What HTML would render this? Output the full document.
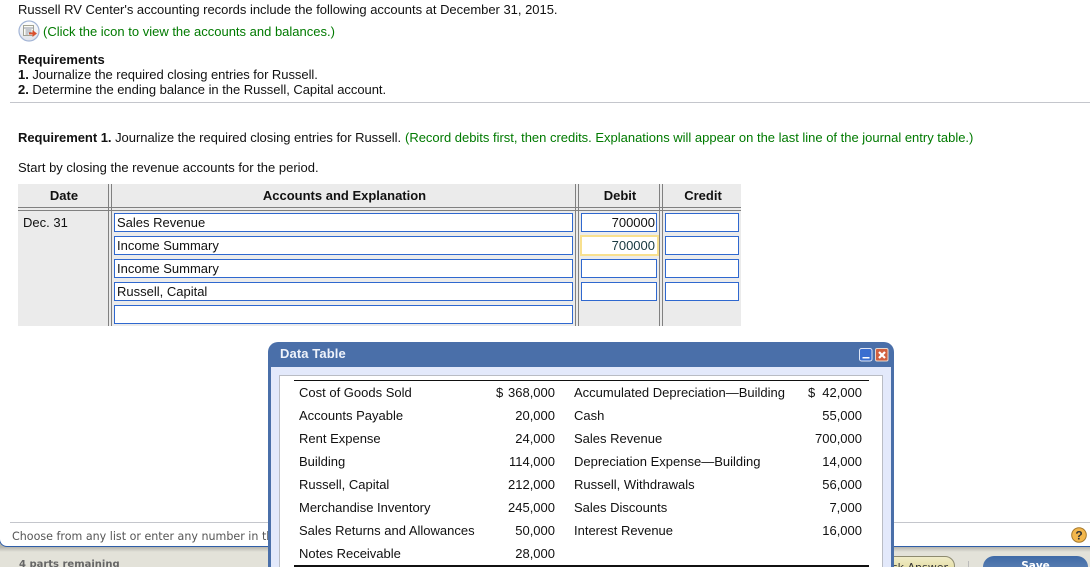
<!DOCTYPE html>
<html><head><meta charset="utf-8">
<style>
html,body{margin:0;padding:0;background:#fff;width:1090px;height:567px;overflow:hidden}
#p{position:relative;width:1090px;height:567px;overflow:hidden;font-family:"Liberation Sans",sans-serif;font-size:13px;color:#111}
.t{position:absolute;white-space:nowrap;line-height:16px}
.g{color:#007a00}
.b{font-weight:bold}
.box{position:absolute;box-sizing:border-box;height:19px;border:1px solid #2f68cf;background:#fff;line-height:18px;padding-left:2px;white-space:nowrap;overflow:hidden}
.r{text-align:right;padding:0 1px 0 0}
.gr{position:absolute;background:#808080}
.c{position:absolute;white-space:nowrap;line-height:16px}
.n{text-align:right}
</style></head><body><div id="p">

<div class="t" style="left:18px;top:2px;letter-spacing:-.02px">Russell RV Center's accounting records include the following accounts at December 31, 2015.</div>
<svg style="position:absolute;left:18px;top:20px" width="23" height="23" viewBox="0 0 23 23">
<defs><linearGradient id="ic" x1="0" y1="0" x2="0" y2="1"><stop offset="0" stop-color="#fff"/><stop offset="1" stop-color="#dfe3ea"/></linearGradient></defs>
<circle cx="11" cy="11" r="10" fill="url(#ic)" stroke="#a3b5d6" stroke-width="1.2"/>
<rect x="5.5" y="5.5" width="10" height="10" fill="#fbfbf4" stroke="#9a9a8a" stroke-width=".9"/>
<path d="M5.5 8h10M7.5 10h6M7.5 12h6M7.5 14h3" stroke="#8c93a6" stroke-width=".9" fill="none"/>
<path d="M11 12.5h3.5v-2.5l4.5 3.5-4.5 3.5v-2.5h-3.5z" fill="#d9502e"/>
</svg>
<div class="t g" style="left:43px;top:24px">(Click the icon to view the accounts and balances.)</div>
<div class="t b" style="left:18px;top:52px">Requirements</div>
<div class="t" style="left:18px;top:67px;letter-spacing:-.04px"><b>1.</b> Journalize the required closing entries for Russell.</div>
<div class="t" style="left:18px;top:82px;letter-spacing:-.03px"><b>2.</b> Determine the ending balance in the Russell, Capital account.</div>
<div style="position:absolute;left:10px;top:102px;width:1080px;height:1px;background:#c4c6cc"></div>

<div class="t" style="left:18px;top:130px"><span style="letter-spacing:-.03px"><b>Requirement 1.</b> Journalize the required closing entries for Russell.</span></div>
<div class="t g" style="left:405px;top:130px;letter-spacing:-.01px">(Record debits first, then credits. Explanations will appear on the last line of the journal entry table.)</div>
<div class="t" style="left:18px;top:160px">Start by closing the revenue accounts for the period.</div>

<div style="position:absolute;left:18px;top:184px;width:723px;height:142px;background:#ebebeb"></div>
<div class="gr" style="left:18px;top:207px;width:723px;height:1px"></div>
<div class="gr" style="left:18px;top:210px;width:723px;height:1px"></div>
<div class="gr" style="left:108px;top:184px;width:1px;height:142px"></div>
<div class="gr" style="left:111px;top:184px;width:1px;height:142px"></div>
<div class="gr" style="left:575px;top:184px;width:1px;height:142px"></div>
<div class="gr" style="left:578px;top:184px;width:1px;height:142px"></div>
<div class="gr" style="left:659px;top:184px;width:1px;height:142px"></div>
<div class="gr" style="left:662px;top:184px;width:1px;height:142px"></div>

<div class="t b" style="left:19px;width:90px;text-align:center;top:188px">Date</div>
<div class="t b" style="left:113px;width:463px;text-align:center;top:188px">Accounts and Explanation</div>
<div class="t b" style="left:580px;width:80px;text-align:center;top:188px">Debit</div>
<div class="t b" style="left:664px;width:78px;text-align:center;top:188px">Credit</div>
<div class="t" style="left:23px;top:215px">Dec. 31</div>

<div class="box" style="left:114px;top:213px;width:459px">Sales Revenue</div>
<div class="box" style="left:114px;top:236px;width:459px">Income Summary</div>
<div class="box" style="left:114px;top:259px;width:459px">Income Summary</div>
<div class="box" style="left:114px;top:282px;width:459px">Russell, Capital</div>
<div class="box" style="left:114px;top:305px;width:459px"></div>

<div class="box r" style="left:581px;top:213px;width:76px">700000</div>
<div class="box r" style="left:580px;top:235px;width:79px;height:21px;border:2px solid #f8e08e;color:#17383f;padding-right:2px;line-height:18px">700000</div>
<div class="box" style="left:581px;top:259px;width:76px"></div>
<div class="box" style="left:581px;top:282px;width:76px"></div>

<div class="box" style="left:665px;top:213px;width:74px"></div>
<div class="box" style="left:665px;top:236px;width:74px"></div>
<div class="box" style="left:665px;top:259px;width:74px"></div>
<div class="box" style="left:665px;top:282px;width:74px"></div>

<!-- footer -->
<div style="position:absolute;left:0;top:540px;width:1090px;height:27px;background:linear-gradient(#b5b4ac,#b5b4ac 7px,#e3e2d9 12px)"></div>
<div style="position:absolute;left:-1px;top:500px;width:1100px;height:47px;box-sizing:border-box;border-bottom:1px solid #2f5ea8;border-left:1px solid #2f5ea8;border-radius:0 0 0 8px;background:#fff"></div>
<div style="position:absolute;left:10px;top:522px;width:1080px;height:1px;background:#c4c6cc"></div>
<div class="t" style="left:12px;top:529px;font-family:'DejaVu Sans',sans-serif;font-size:11.1px;color:#555">Choose from any list or enter any number in the input fields and then click Check Answer.</div>
<div class="t" style="left:19px;top:557px;font-family:'DejaVu Sans',sans-serif;font-size:10px;font-weight:bold;color:#666">4 parts remaining</div>
<svg style="position:absolute;left:1071px;top:527px" width="16" height="16" viewBox="0 0 16 16">
<circle cx="8" cy="8" r="7.3" fill="#f3b74c" stroke="#a5782a"/>
<text x="8" y="12.5" text-anchor="middle" font-family="Liberation Sans" font-weight="bold" font-size="12" fill="#333">?</text>
</svg>
<div style="position:absolute;left:860px;top:556px;width:95px;height:20px;box-sizing:border-box;border:1px solid #8d8a6f;border-radius:10px;background:linear-gradient(#f0ecc8,#dfd793);line-height:22px;text-align:right;padding-right:6px;color:#333;font-family:'DejaVu Sans',sans-serif;font-size:11px;overflow:hidden">Check Answer</div>
<div style="position:absolute;left:968px;top:561px;width:1px;height:6px;background:#bbb"></div>
<div style="position:absolute;left:983px;top:556px;width:105px;height:24px;border-radius:11px;background:linear-gradient(#3f6aa6,#6f8fbd);color:#fff;font-weight:bold;font-size:10.5px;line-height:20px;text-align:center;font-family:'DejaVu Sans',sans-serif">Save</div>

<!-- modal -->
<div style="position:absolute;left:268px;top:342px;width:626px;height:240px;background:#4a6fa9;border-radius:10px 10px 0 0"></div>
<div style="position:absolute;left:271px;top:367px;width:620px;height:215px;background:#e3e9fb"></div>
<div style="position:absolute;left:279px;top:375px;width:602px;height:210px;background:#fff;border:1px solid #b9bcc4"></div>
<div class="t b" style="left:280px;top:346px;color:#eef2fa;letter-spacing:.1px">Data Table</div>
<svg style="position:absolute;left:859px;top:348px" width="30" height="14" viewBox="0 0 30 14">
<rect x=".5" y=".5" width="12.5" height="12.5" rx="2" fill="#3a6ed0" stroke="#dfe6f5"/>
<rect x="3.5" y="9" width="7" height="1.5" fill="#fff"/>
<rect x="16.5" y=".5" width="12.5" height="12.5" rx="1.5" fill="#d2603f" stroke="#e8d8cc"/>
<path d="M20 4l6 6M26 4l-6 6" stroke="#fff" stroke-width="2.2"/>
</svg>

<div style="position:absolute;left:294px;top:380px;width:575px;height:1px;background:#111"></div>
<div style="position:absolute;left:294px;top:565px;width:575px;height:1.5px;background:#111"></div>

<div class="c" style="left:299px;top:385px">Cost of Goods Sold</div>
<div class="c" style="left:299px;top:408px">Accounts Payable</div>
<div class="c" style="left:299px;top:431px">Rent Expense</div>
<div class="c" style="left:299px;top:454px">Building</div>
<div class="c" style="left:299px;top:477px">Russell, Capital</div>
<div class="c" style="left:299px;top:500px">Merchandise Inventory</div>
<div class="c" style="left:299px;top:523px">Sales Returns and Allowances</div>
<div class="c" style="left:299px;top:546px">Notes Receivable</div>

<div class="c" style="left:496px;top:385px">$</div>
<div class="c n" style="left:480px;width:75px;top:385px">368,000</div>
<div class="c n" style="left:480px;width:75px;top:408px">20,000</div>
<div class="c n" style="left:480px;width:75px;top:431px">24,000</div>
<div class="c n" style="left:480px;width:75px;top:454px">114,000</div>
<div class="c n" style="left:480px;width:75px;top:477px">212,000</div>
<div class="c n" style="left:480px;width:75px;top:500px">245,000</div>
<div class="c n" style="left:480px;width:75px;top:523px">50,000</div>
<div class="c n" style="left:480px;width:75px;top:546px">28,000</div>

<div class="c" style="left:574px;top:385px">Accumulated Depreciation—Building</div>
<div class="c" style="left:574px;top:408px">Cash</div>
<div class="c" style="left:574px;top:431px">Sales Revenue</div>
<div class="c" style="left:574px;top:454px">Depreciation Expense—Building</div>
<div class="c" style="left:574px;top:477px">Russell, Withdrawals</div>
<div class="c" style="left:574px;top:500px">Sales Discounts</div>
<div class="c" style="left:574px;top:523px">Interest Revenue</div>

<div class="c" style="left:808px;top:385px">$</div>
<div class="c n" style="left:790px;width:72px;top:385px">42,000</div>
<div class="c n" style="left:790px;width:72px;top:408px">55,000</div>
<div class="c n" style="left:790px;width:72px;top:431px">700,000</div>
<div class="c n" style="left:790px;width:72px;top:454px">14,000</div>
<div class="c n" style="left:790px;width:72px;top:477px">56,000</div>
<div class="c n" style="left:790px;width:72px;top:500px">7,000</div>
<div class="c n" style="left:790px;width:72px;top:523px">16,000</div>

</div></body></html>
